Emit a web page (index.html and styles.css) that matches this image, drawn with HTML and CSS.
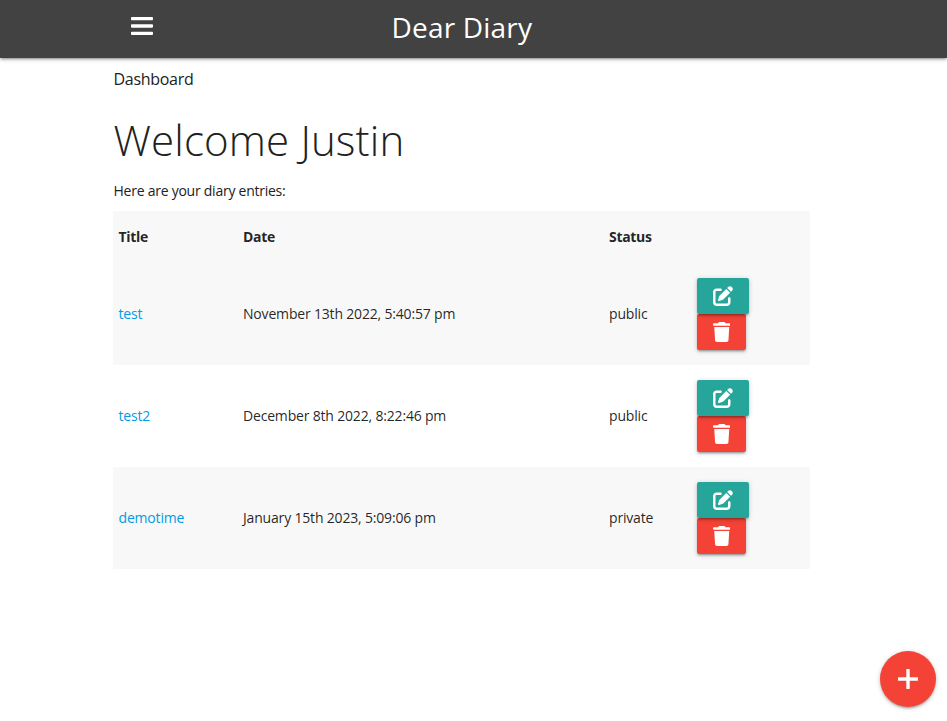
FILE: index.html
```html
<!DOCTYPE html>
<html lang="en">
<head>
<meta charset="utf-8">
<title>Dear Diary</title>
<link rel="stylesheet" href="styles.css">
</head>
<body>
<header class="navbar">
  <a class="menu" href="#" aria-label="Menu">
    <svg class="menu-icon" viewBox="0 0 22 18"><path d="M.8 0h20.400a.8.8 0 0 1 .8.8v1.700a.8.8 0 0 1-.8.8H.8a.8.8 0 0 1-.8-.8V.8A.8.8 0 0 1 .8 0zm0 7.350h20.400a.8.8 0 0 1 .8.8v1.700a.8.8 0 0 1-.8.8H.8a.8.8 0 0 1-.8-.8v-1.700a.8.8 0 0 1 .8-.8zm0 7.350h20.400a.8.8 0 0 1 .8.8v1.700a.8.8 0 0 1-.8.8H.8a.8.8 0 0 1-.8-.8v-1.700a.8.8 0 0 1 .8-.8z"/></svg>
  </a>
  <a class="brand" href="#">Dear Diary</a>
</header>
<main class="container">
  <p class="crumb">Dashboard</p>
  <h1 class="welcome">Welcome Justin</h1>
  <p class="intro">Here are your diary entries:</p>
  <table class="entries">
    <thead>
      <tr><th class="c-title">Title</th><th class="c-date">Date</th><th class="c-status">Status</th><th class="c-actions"></th></tr>
    </thead>
    <tbody>
      <tr>
        <td><a href="#">test</a></td><td>November 13th 2022, 5:40:57 pm</td><td>public</td>
        <td class="actions">
          <a class="btn btn-edit" href="#" aria-label="Edit"><svg class="icon-edit" viewBox="0 0 512 512"><path d="M471.600 21.700c-21.900-21.900-57.300-21.900-79.200 0L362.300 51.700l97.900 97.900 30.100-30.100c21.900-21.900 21.900-57.300 0-79.200L471.600 21.700zm-299.200 220c-6.100 6.100-10.800 13.600-13.500 21.900l-29.600 88.800c-2.900 8.600-.6 18.100 5.800 24.600s15.900 8.700 24.600 5.800l88.800-29.600c8.200-2.700 15.700-7.400 21.900-13.500L437.700 172.300 339.700 74.300 172.400 241.700zM96 64C43 64 0 107 0 160V416c0 53 43 96 96 96H352c53 0 96-43 96-96V320c0-17.700-14.300-32-32-32s-32 14.300-32 32v96c0 17.700-14.300 32-32 32H96c-17.700 0-32-14.300-32-32V160c0-17.700 14.300-32 32-32h96c17.700 0 32-14.300 32-32s-14.300-32-32-32H96z"/></svg></a>
          <a class="btn btn-del" href="#" aria-label="Delete"><svg class="icon-del" viewBox="0 0 448 512"><path d="M135.200 17.700L128 32H32C14.300 32 0 46.300 0 64S14.300 96 32 96H416c17.700 0 32-14.300 32-32s-14.300-32-32-32H320l-7.200-14.300C307.400 6.800 296.300 0 284.200 0H163.800c-12.100 0-23.200 6.800-28.600 17.700zM416 128H32L53.200 467c1.600 25.300 22.600 45 47.900 45H346.900c25.300 0 46.300-19.700 47.900-45L416 128z"/></svg></a>
        </td>
      </tr>
      <tr>
        <td><a href="#">test2</a></td><td>December 8th 2022, 8:22:46 pm</td><td>public</td>
        <td class="actions">
          <a class="btn btn-edit" href="#" aria-label="Edit"><svg class="icon-edit" viewBox="0 0 512 512"><path d="M471.600 21.700c-21.900-21.900-57.300-21.900-79.200 0L362.300 51.700l97.900 97.900 30.100-30.100c21.900-21.900 21.900-57.300 0-79.200L471.600 21.700zm-299.200 220c-6.100 6.100-10.800 13.600-13.500 21.900l-29.600 88.800c-2.900 8.600-.6 18.100 5.800 24.600s15.900 8.700 24.600 5.800l88.800-29.600c8.200-2.700 15.700-7.400 21.900-13.500L437.700 172.300 339.700 74.300 172.400 241.700zM96 64C43 64 0 107 0 160V416c0 53 43 96 96 96H352c53 0 96-43 96-96V320c0-17.700-14.300-32-32-32s-32 14.300-32 32v96c0 17.700-14.300 32-32 32H96c-17.700 0-32-14.300-32-32V160c0-17.700 14.300-32 32-32h96c17.700 0 32-14.300 32-32s-14.300-32-32-32H96z"/></svg></a>
          <a class="btn btn-del" href="#" aria-label="Delete"><svg class="icon-del" viewBox="0 0 448 512"><path d="M135.200 17.700L128 32H32C14.300 32 0 46.300 0 64S14.300 96 32 96H416c17.700 0 32-14.300 32-32s-14.300-32-32-32H320l-7.200-14.300C307.400 6.800 296.300 0 284.200 0H163.800c-12.100 0-23.200 6.800-28.600 17.700zM416 128H32L53.200 467c1.600 25.300 22.600 45 47.900 45H346.900c25.300 0 46.300-19.700 47.900-45L416 128z"/></svg></a>
        </td>
      </tr>
      <tr>
        <td><a href="#">demotime</a></td><td>January 15th 2023, 5:09:06 pm</td><td>private</td>
        <td class="actions">
          <a class="btn btn-edit" href="#" aria-label="Edit"><svg class="icon-edit" viewBox="0 0 512 512"><path d="M471.600 21.700c-21.900-21.900-57.300-21.900-79.200 0L362.300 51.700l97.900 97.900 30.100-30.100c21.900-21.900 21.900-57.300 0-79.200L471.600 21.700zm-299.200 220c-6.100 6.100-10.800 13.600-13.500 21.900l-29.600 88.800c-2.900 8.600-.6 18.100 5.800 24.600s15.900 8.700 24.600 5.800l88.800-29.600c8.200-2.700 15.700-7.400 21.900-13.500L437.700 172.300 339.700 74.300 172.400 241.700zM96 64C43 64 0 107 0 160V416c0 53 43 96 96 96H352c53 0 96-43 96-96V320c0-17.700-14.300-32-32-32s-32 14.300-32 32v96c0 17.700-14.300 32-32 32H96c-17.700 0-32-14.300-32-32V160c0-17.700 14.300-32 32-32h96c17.700 0 32-14.300 32-32s-14.300-32-32-32H96z"/></svg></a>
          <a class="btn btn-del" href="#" aria-label="Delete"><svg class="icon-del" viewBox="0 0 448 512"><path d="M135.200 17.700L128 32H32C14.300 32 0 46.300 0 64S14.300 96 32 96H416c17.700 0 32-14.300 32-32s-14.300-32-32-32H320l-7.200-14.300C307.400 6.800 296.300 0 284.200 0H163.800c-12.100 0-23.200 6.800-28.600 17.700zM416 128H32L53.200 467c1.600 25.300 22.600 45 47.900 45H346.900c25.300 0 46.300-19.700 47.900-45L416 128z"/></svg></a>
        </td>
      </tr>
    </tbody>
  </table>
</main>
<a class="fab" href="#" aria-label="Add entry">
  <svg class="fab-icon" viewBox="0 0 20 20"><path d="M10 1v18M1 10h18"/></svg>
</a>
</body>
</html>
```
FILE: styles.css
```css
* { box-sizing: border-box; }
html, body { margin: 0; height: 100%; overflow: hidden; }
body {
  background: #fff;
  color: rgba(0, 0, 0, 0.87);
  font-family: "Open Sans", "Noto Sans", sans-serif;
  font-size: 14px;
}
.navbar {
  height: 58px;
  background: #424242;
  display: flex;
  align-items: center;
  padding-left: 131px;
  box-shadow: 0 2px 2px 0 rgba(0,0,0,.14), 0 3px 1px -2px rgba(0,0,0,.12), 0 1px 5px 0 rgba(0,0,0,.2);
}
.menu { display: flex; width: 22px; margin-top: -6px; }
.menu-icon { width: 22px; height: 18px; fill: #fff; }
.brand {
  margin: -4px 0 0 238.5px;
  color: #fff;
  font-size: 28px;
  font-weight: 400;
  letter-spacing: 0.2px;
  text-decoration: none;
  white-space: nowrap;
}
.container { width: 697px; margin-left: 113px; }
.crumb { margin: 0 0 0 .5px; padding-top: 10px; height: 42px; font-size: 16px; line-height: 22px; font-weight: 400; letter-spacing: -0.3px; color: #212121; }
.welcome { margin: 12px 0 0 .5px; font-size: 42px; line-height: 56px; font-weight: 300; letter-spacing: 0.15px; color: #212121; }
.intro { margin: 13px 0 10px .5px; font-size: 14px; line-height: 20px; font-weight: 400; letter-spacing: -0.25px; color: #212121; }
.entries { width: 697px; border-collapse: collapse; table-layout: fixed; }
.entries th, .entries td { padding: 0 6px 2px; text-align: left; font-size: 14px; letter-spacing: -0.18px; }
.entries th:first-child, .entries td:first-child { padding-left: 5.5px; }
.entries thead tr { height: 52px; background: #f8f8f8; }
.entries th { font-weight: 700; letter-spacing: -0.3px; }
.entries tbody tr { height: 102px; }
.entries tbody tr:nth-child(odd) { background: #f8f8f8; }
.c-title { width: 124px; }
.c-date { width: 366px; }
.c-status { width: 88px; }
.entries a { color: #039be5; text-decoration: none; }
.entries td.actions { padding: 0 0 0 6px; }
.btn {
  display: flex;
  align-items: center;
  justify-content: center;
  height: 36px;
  border-radius: 2px;
  box-shadow: 0 2px 2px 0 rgba(0,0,0,.14), 0 3px 1px -2px rgba(0,0,0,.12), 0 1px 5px 0 rgba(0,0,0,.2);
}
.btn-edit { width: 52px; background: #26a69a; position: relative; z-index: 1; }
.btn-del { width: 49px; background: #f44336; }
.icon-edit { width: 20px; height: 20px; fill: #fff; }
.icon-del { width: 17.500px; height: 20px; fill: #fff; }
.fab {
  position: fixed;
  right: 11px;
  bottom: 14px;
  width: 56px;
  height: 56px;
  border-radius: 50%;
  background: #f44336;
  display: flex;
  align-items: center;
  justify-content: center;
  box-shadow: 0 2px 2px 0 rgba(0,0,0,.14), 0 3px 1px -2px rgba(0,0,0,.12), 0 1px 5px 0 rgba(0,0,0,.2);
}
.fab-icon { width: 20px; height: 20px; stroke: #fff; stroke-width: 3.400; stroke-linecap: round; fill: none; }
```
